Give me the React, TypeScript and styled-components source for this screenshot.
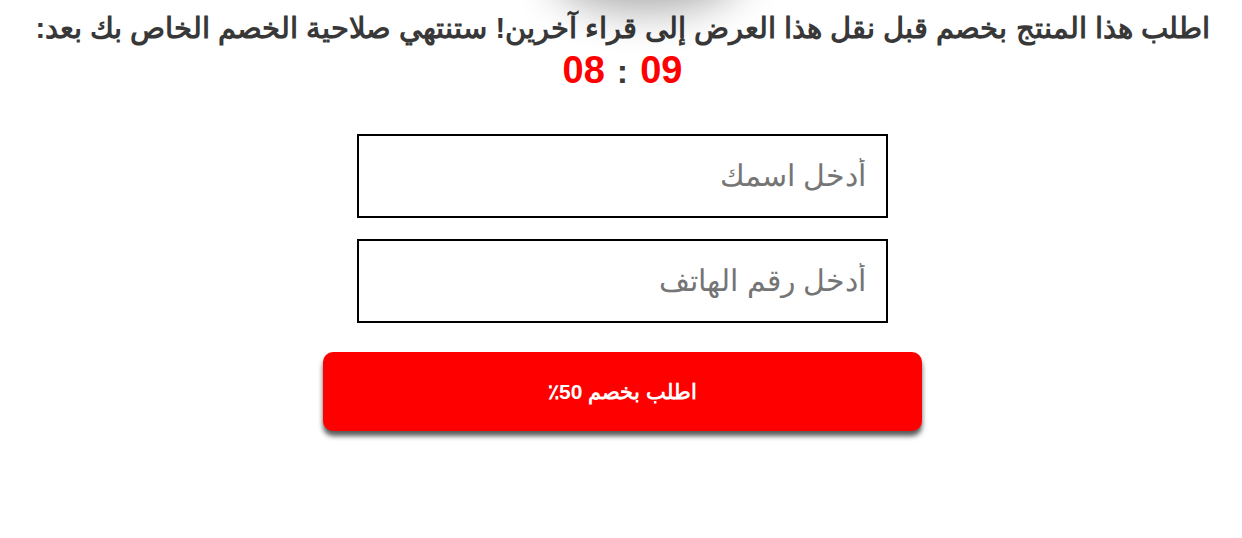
import styled, { createGlobalStyle } from 'styled-components';

const GlobalStyle = createGlobalStyle`
  html, body {
    margin: 0;
    padding: 0;
    background: #fff;
  }
  body {
    font-family: 'Liberation Sans', Arial, sans-serif;
  }
`;

const App = () => {
  return (
    <Page dir='rtl'>
      <GlobalStyle />
      <TopShadow />
      <Headline>
        اطلب هذا المنتج بخصم قبل نقل هذا العرض إلى قراء آخرين! ستنتهي صلاحية الخصم الخاص بك بعد:
      </Headline>
      <Timer dir='ltr'>
        <Digits>08</Digits>
        <Colon>:</Colon>
        <Digits>09</Digits>
      </Timer>
      <OrderForm onSubmit={(e) => e.preventDefault()}>
        <Field type='text' placeholder='أدخل اسمك' />
        <Field type='tel' placeholder='أدخل رقم الهاتف' />
        <SubmitButton type='submit'>اطلب بخصم 50٪</SubmitButton>
      </OrderForm>
    </Page>
  );
};

const Page = styled.div`
  position: relative;
  display: flex;
  flex-direction: column;
  align-items: center;
  width: 1242px;
  height: 538px;
  padding: 11px 0 0 3px;
  box-sizing: border-box;
  overflow: hidden;
`;

const TopShadow = styled.div`
  position: absolute;
  top: -60px;
  left: 50%;
  width: 170px;
  height: 60px;
  margin-left: -60px;
  border-radius: 50%;
  box-shadow: 0 0 40px 12px rgba(0, 0, 0, 0.32);
`;

const Headline = styled.h2`
  margin: 0;
  font-size: 29px;
  font-weight: 700;
  line-height: 34px;
  color: #383838;
  text-align: center;
  white-space: nowrap;
`;

const Timer = styled.div`
  display: flex;
  align-items: baseline;
  gap: 12px;
  margin-top: 3px;
  font-size: 38px;
  font-weight: 700;
  line-height: 44px;
`;

const Digits = styled.span`
  color: #ff0000;
`;

const Colon = styled.span`
  color: #3a3a3a;
  font-size: 34px;
`;

const OrderForm = styled.form`
  display: flex;
  flex-direction: column;
  align-items: center;
  gap: 21px;
  margin-top: 41px;
`;

const Field = styled.input`
  width: 531px;
  height: 84px;
  box-sizing: border-box;
  padding: 0 20px;
  border: 2px solid #000;
  outline: none;
  font-family: 'Liberation Sans', Arial, sans-serif;
  font-size: 30px;
  text-align: right;
  direction: rtl;
  &::placeholder {
    color: #757575;
  }
`;

const SubmitButton = styled.button`
  width: 599px;
  height: 79px;
  margin-top: 8px;
  border: none;
  border-radius: 10px;
  background: #ff0000;
  color: #fff;
  font-family: 'Liberation Sans', Arial, sans-serif;
  font-size: 21px;
  font-weight: 700;
  box-shadow: 0 5px 5px rgba(0, 0, 0, 0.65);
  cursor: pointer;
`;

export default App;
